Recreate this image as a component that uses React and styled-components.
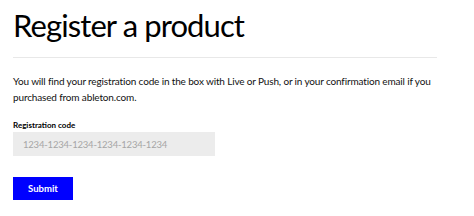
import React from "react";
import styled, { createGlobalStyle } from "styled-components";

const Global = createGlobalStyle`
  html, body { margin: 0; padding: 0; background: #fff; }
  body { font-family: "Lato", "Liberation Sans", sans-serif; color: #000; }
  * { box-sizing: border-box; }
`;

const Page = styled.main`
  padding: 0 37px 0 13px;
  width: 474px;
`;

const Title = styled.h1`
  margin: 0;
  padding-top: 7px;
  padding-bottom: 14px;
  font-size: 31px;
  font-weight: 400;
  line-height: 36px;
  letter-spacing: -0.9px;
  border-bottom: 1px solid #e8e8e8;
`;

const Intro = styled.p`
  margin: 15px 0 0;
  font-size: 10px;
  line-height: 16px;
  letter-spacing: -0.15px;
  color: #111;
`;

const Form = styled.form`
  display: flex;
  flex-direction: column;
  align-items: flex-start;
  margin-top: 15px;
`;

const Label = styled.label`
  font-size: 8px;
  font-weight: 700;
  line-height: 10px;
  letter-spacing: 0px;
  margin-bottom: 2px;
`;

const Input = styled.input`
  width: 202px;
  height: 24px;
  border: none;
  background: #ececec;
  padding: 0 10px;
  font-family: inherit;
  font-size: 9.5px;
  letter-spacing: -0.2px;
  color: #000;
  outline: none;
  &::placeholder { color: #a6a6a6; }
`;

const Button = styled.button`
  margin-top: 21px;
  width: 60px;
  height: 23px;
  border: none;
  background: #0000ff;
  color: #fff;
  font-family: inherit;
  font-size: 9.5px;
  font-weight: 700;
  letter-spacing: 0px;
  cursor: pointer;
`;

export default function App() {
  return (
    <>
      <Global />
      <Page>
        <Title>Register a product</Title>
        <Intro>
          You will find your registration code in the box with Live or Push, or in your confirmation email if you
          purchased from ableton.com.
        </Intro>
        <Form onSubmit={(e) => e.preventDefault()}>
          <Label htmlFor="code">Registration code</Label>
          <Input id="code" placeholder="1234-1234-1234-1234-1234-1234" />
          <Button type="submit">Submit</Button>
        </Form>
      </Page>
    </>
  );
}
